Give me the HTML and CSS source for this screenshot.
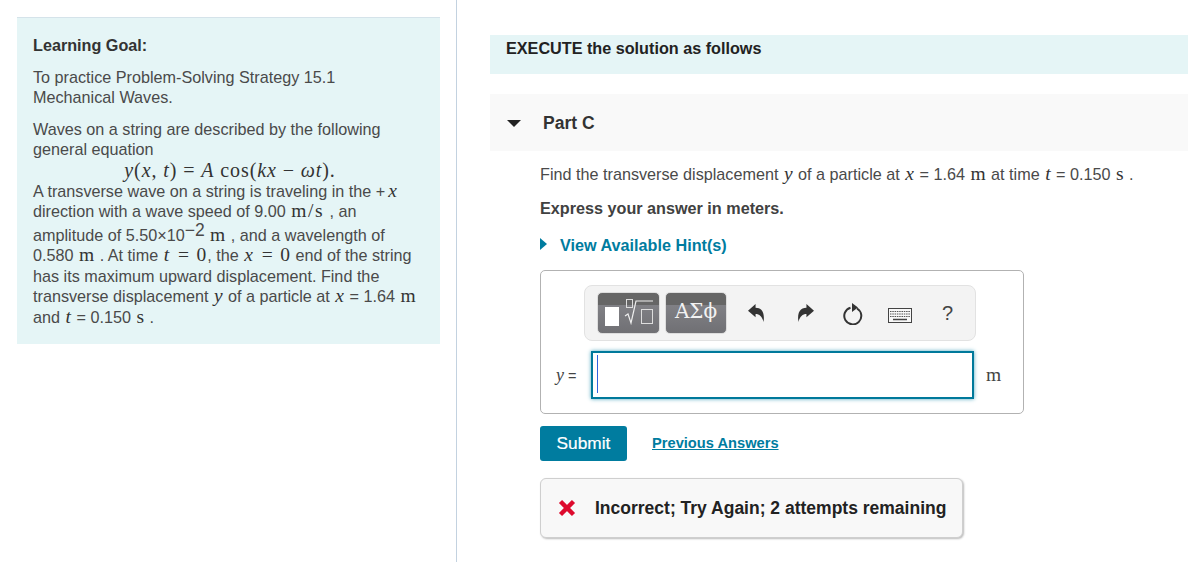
FILE: index.html
```html
<!DOCTYPE html>
<html lang="en">
<head>
<meta charset="utf-8">
<title>Part C</title>
<link rel="stylesheet" href="styles.css">
</head>
<body>
<div class="page">
  <aside class="left">
    <section class="goal">
      <p class="goal-title">Learning Goal:</p>
      <p class="para">To practice Problem-Solving Strategy 15.1<br>Mechanical Waves.</p>
      <p class="para tight">Waves on a string are described by the following<br>general equation</p>
      <div class="equation"><i>y</i>(<i>x</i>, <i>t</i>) = <i>A</i> cos(<i>kx</i> − <i>ωt</i>).</div>
      <p class="para">A transverse wave on a string is traveling in the +<i class="m after-plus">x</i><br>
      direction with a wave speed of 9.00 <span class="m ms">m/s</span> , an<br>
      <span class="supline">amplitude of 5.50×10<sup>−2</sup> <span class="m">m</span> , and a wavelength of</span><br>
      0.580 <span class="m">m</span> . At time <i class="m">t</i> <span class="m rel">= 0</span>, the <i class="m">x</i> <span class="m rel">= 0</span> end of the string<br>
      has its maximum upward displacement. Find the<br>
      transverse displacement <i class="m">y</i> of a particle at <i class="m">x</i> = 1.64 <span class="m">m</span><br>
      and <i class="m">t</i> = 0.150 <span class="m">s</span> .</p>
    </section>
  </aside>
  <main class="right">
    <div class="execute">EXECUTE the solution as follows</div>
    <div class="part-head">
      <svg class="caret-down" viewBox="0 0 14 7"><path d="M0 0H14L7 7Z"/></svg>
      <span>Part C</span>
    </div>
    <div class="part-body">
      <p class="question">Find the transverse displacement <i class="m">y</i> of a particle at <i class="m">x</i> = 1.64 <span class="m">m</span> at time <i class="m">t</i> = 0.150 <span class="m">s</span> .</p>
      <p class="express">Express your answer in meters.</p>
      <div class="hint">
        <svg class="caret-right" viewBox="0 0 7 12"><path d="M0 0L7 6L0 12Z"/></svg>
        <span>View Available Hint(s)</span>
      </div>
      <div class="card">
        <div class="toolbar">
          <div class="tool-btn tool-math">
            <svg viewBox="0 0 62 42" width="62" height="42">
              <rect x="8" y="15" width="14" height="19" fill="#fff"/>
              <rect x="29.500" y="7.500" width="6" height="8" fill="none" stroke="#ddd"/>
              <path d="M28 24L31 22L34 31L39 9H56" fill="none" stroke="#eee" stroke-width="1.200"/>
              <rect x="44.500" y="17.500" width="11" height="14" fill="none" stroke="#ddd"/>
            </svg>
          </div>
          <div class="tool-btn tool-greek">ΑΣϕ</div>
          <div class="tool-icons">
            <svg class="ic-arrow" viewBox="0 0 18 20"><path d="M0 7L8 0V4C14 4 18 8 16.500 19C15 13 12 10.500 8 10.500V14Z"/></svg>
            <svg class="ic-arrow" viewBox="0 0 18 20"><path d="M18 7L10 0V4C4 4 0 8 1.500 19C3 13 6 10.500 10 10.500V14Z"/></svg>
            <svg class="ic-reset" viewBox="0 0 20 24"><path d="M7.500 6.700A8.500 8.500 0 1 0 14 7.500" fill="none" stroke="#333" stroke-width="2"/><path d="M9 2L15 6.500L9 11Z" fill="#333"/></svg>
            <svg class="ic-keys" viewBox="0 0 24 15">
              <rect x=".5" y=".5" width="23" height="14" fill="#f8f8f8" stroke="#444"/>
              <path d="M2 3.500H22M2 6H22M2 8.500H22" stroke="#555" stroke-width="1" stroke-dasharray="1.500 .8" fill="none"/>
              <path d="M5 11.500H19" stroke="#444" stroke-width="1.500"/>
            </svg>
            <span class="ic-help">?</span>
          </div>
        </div>
        <div class="answer-row">
          <div class="answer-label"><i class="y">y</i> =</div>
          <div class="answer-input"><span class="text-caret"></span></div>
          <div class="answer-unit">m</div>
        </div>
      </div>
      <div class="actions">
        <button class="submit" type="button">Submit</button>
        <a class="prev" href="#">Previous Answers</a>
      </div>
      <div class="feedback">
        <svg class="x-icon" viewBox="0 0 18 18"><path d="M2.500 2.500L15.500 15.500M15.500 2.500L2.500 15.500" stroke="#dd0a2d" stroke-width="4.400" fill="none"/></svg>
        <span>Incorrect; Try Again; 2 attempts remaining</span>
      </div>
    </div>
  </main>
</div>
</body>
</html>
```
FILE: styles.css
```css
* { box-sizing: border-box; }
html, body { margin: 0; padding: 0; background: #fff; }
body {
  width: 1188px;
  height: 562px;
  overflow: hidden;
  font-family: "Liberation Sans", Arial, sans-serif;
  font-size: 16.200px;
  color: #4a4a4a;
}
p { margin: 0; }
.page { display: flex; height: 562px; }
.left {
  width: 457px;
  flex: none;
  padding: 17px 16px 0 17px;
  border-right: 1px solid #c3d2e0;
}
.goal {
  background: #e5f5f6;
  border-top: 1px solid #d5e3ea;
  height: 327px;
  padding: 17px 16px 0 16px;
  line-height: 20.500px;
}
.goal-title { font-weight: bold; color: #333; margin-bottom: 11px; }
.para { margin-bottom: 11px; }
.para.tight { margin-bottom: 0; }
.equation {
  font-family: "Liberation Serif", serif;
  font-size: 20px;
  line-height: 20px;
  letter-spacing: .9px;
  text-align: center;
  padding-left: 3px;
  margin-bottom: 1px;
  color: #333;
}
.m { font-family: "Liberation Serif", serif; font-size: 19.500px; line-height: 1; color: #333; padding: 0 1px; }
.ms { letter-spacing: 1.500px; }
.rel { margin-left: 2.500px; word-spacing: 2.500px; }
.after-plus { padding-left: 3px; }
sup { font-size: 17.500px; line-height: 0; vertical-align: 5px; }
.supline { display: inline-block; padding-top: 3px; }
.right { flex: 1; padding: 35px 0 0 33px; min-width: 0; }
.execute {
  height: 39px;
  background: #e5f5f6;
  padding: 5px 0 0 16px;
  font-weight: bold;
  line-height: 17px;
  color: #222;
}
.part-head {
  margin-top: 20px;
  height: 57px;
  padding-top: 1px;
  background: #f9f9f9;
  display: flex;
  align-items: center;
  font-weight: bold;
  font-size: 17.500px;
  color: #333;
}
.part-head span { margin-left: 22px; }
.caret-down { width: 14px; height: 7px; margin: 0 0 -1px 17px; fill: #222; flex: none; }
.part-body { padding-left: 50px; }
.question { margin-top: 13px; line-height: 20px; }
.express { margin-top: 14px; font-weight: bold; line-height: 20px; color: #414141; }
.hint {
  margin-top: 17px;
  display: flex;
  align-items: center;
  font-weight: bold;
  color: #007c9f;
  line-height: 20px;
}
.caret-right { width: 7px; height: 12px; fill: #007c9f; margin: 0 13px 3px 0; flex: none; }
.card {
  margin-top: 15px;
  width: 484px;
  height: 144px;
  border: 1px solid #b2b2b2;
  border-radius: 5px;
  padding: 14px 0 0 43px;
}
.toolbar {
  width: 392px;
  height: 56px;
  background: #f3f3f3;
  border: 1px solid #e2e2e2;
  border-radius: 8px;
  display: flex;
  align-items: center;
  padding-left: 12px;
}
.tool-btn {
  height: 42px;
  border-radius: 5px;
  background: linear-gradient(#666 0, #666 31%, #808085 31%, #707074 100%);
  border: 1px solid #ddd;
  flex: none;
}
.tool-math { width: 63px; overflow: hidden; }
.tool-math svg { display: block; margin: -1px 0 0 -1px; }
.tool-greek {
  width: 62px;
  margin-left: 5px;
  color: #f2f2f2;
  font-family: "DejaVu Serif", serif;
  font-size: 20px;
  line-height: 37px;
  text-align: center;
}
.tool-icons { display: flex; align-items: center; margin-left: 21px; }
.ic-arrow { width: 17px; height: 19px; fill: #333; flex: none; margin-right: 32px; }
.ic-reset { width: 20px; height: 24px; flex: none; margin-left: -3px; margin-right: 25px; }
.ic-keys { width: 24px; height: 15px; flex: none; margin-right: 30px; position: relative; top: 2px; }
.ic-help { font-size: 20px; color: #444; line-height: 24px; }
.answer-row { display: flex; align-items: center; margin-top: 10px; margin-left: -30px; }
.answer-label {
  width: 37px;
  padding-left: 2px;
  font-size: 14.500px;
  color: #444;
  white-space: nowrap;
}
.y { font-family: "Liberation Serif", serif; font-size: 18px; }
.answer-input {
  width: 383px;
  height: 48px;
  border: 2px solid #00799b;
  box-shadow: 0 0 4px #4fa7bf;
  background: #fff;
  padding: 2px 0 0 4px;
  flex: none;
}
.text-caret { display: block; width: 1px; height: 38px; background: #2f62e0; }
.answer-unit {
  margin-left: 12px;
  font-family: "Liberation Serif", serif;
  font-size: 19.500px;
  color: #444;
}
.actions { display: flex; align-items: center; margin-top: 12px; }
.submit {
  width: 87px;
  height: 35px;
  background: #007c9f;
  border: 0;
  border-radius: 3px;
  color: #fff;
  font-family: "Liberation Sans", Arial, sans-serif;
  font-size: 17.300px;
  font-weight: 400;
  padding: 0;
  -webkit-text-stroke: .2px #fff;
}
.prev {
  margin-left: 25px;
  color: #007c9f;
  font-weight: bold;
  font-size: 14.670px;
  position: relative;
  top: -1px;
}
.feedback {
  margin-top: 17px;
  width: 423px;
  height: 60px;
  background: #f8f8f8;
  border: 1px solid #cfcfcf;
  border-radius: 6px;
  box-shadow: 1px 1px 2px #bbb;
  display: flex;
  align-items: center;
  padding-left: 17px;
  font-weight: bold;
  font-size: 17.500px;
  color: #222;
}
.x-icon { width: 18px; height: 18px; flex: none; margin-right: 19px; }
```
